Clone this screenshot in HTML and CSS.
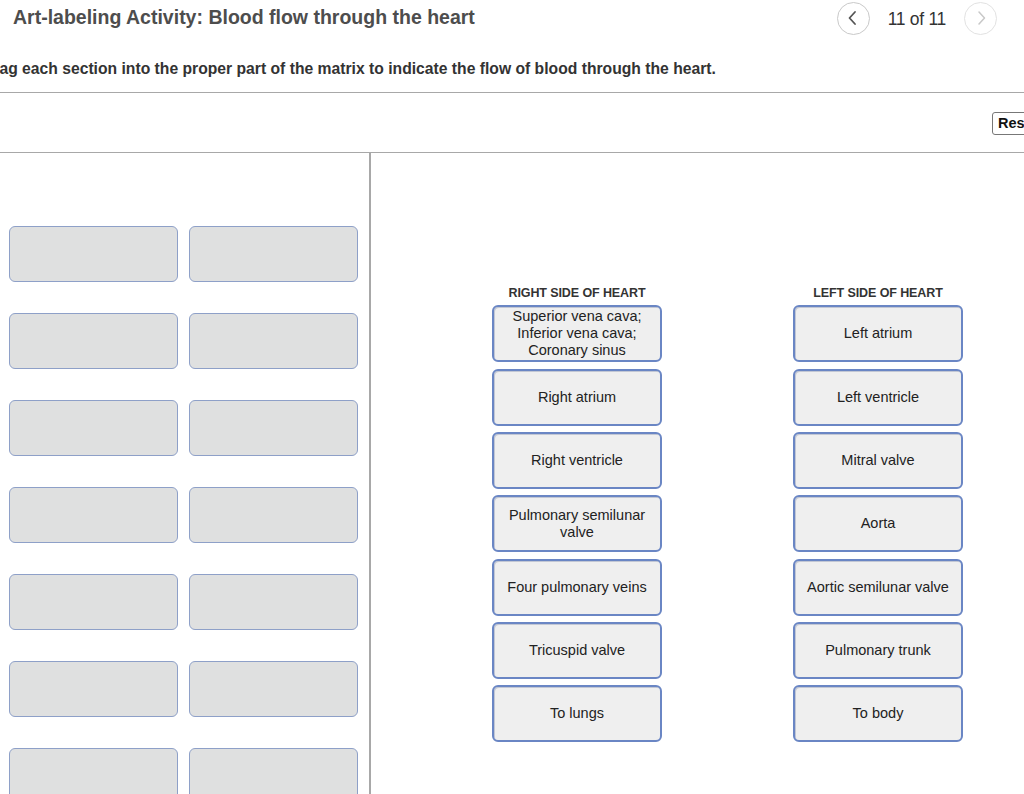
FILE: index.html
```html
<!DOCTYPE html>
<html>
<head>
<meta charset="utf-8">
<link rel="stylesheet" href="styles.css">
</head>
<body>
<div class="page">
  <header class="top">
    <h1 class="title">Art-labeling Activity: Blood flow through the heart</h1>
    <nav class="pager">
      <span class="circle prev"><svg width="14" height="16" viewBox="0 0 14 16"><path d="M9 2 L3.5 8 L9 14" fill="none" stroke="#555" stroke-width="1.8" stroke-linecap="round" stroke-linejoin="round"/></svg></span>
      <span class="count">11 of 11</span>
      <span class="circle next"><svg width="14" height="16" viewBox="0 0 14 16"><path d="M5 2 L10.5 8 L5 14" fill="none" stroke="#c8c8c8" stroke-width="1.5" stroke-linecap="round" stroke-linejoin="round"/></svg></span>
    </nav>
  </header>
  <p class="instructions">Drag each section into the proper part of the matrix to indicate the flow of blood through the heart.</p>
  <div class="toolbar">
    <button class="reset">Reset</button>
  </div>
  <main class="work">
    <section class="bank">
      <div class="slot"></div><div class="slot"></div>
      <div class="slot"></div><div class="slot"></div>
      <div class="slot"></div><div class="slot"></div>
      <div class="slot"></div><div class="slot"></div>
      <div class="slot"></div><div class="slot"></div>
      <div class="slot"></div><div class="slot"></div>
      <div class="slot"></div><div class="slot"></div>
    </section>
    <section class="matrix">
      <div class="col">
        <h2 class="col-head">RIGHT SIDE OF HEART</h2>
        <div class="cell">Superior vena cava;<br>Inferior vena cava;<br>Coronary sinus</div>
        <div class="cell">Right atrium</div>
        <div class="cell">Right ventricle</div>
        <div class="cell">Pulmonary semilunar<br>valve</div>
        <div class="cell">Four pulmonary veins</div>
        <div class="cell">Tricuspid valve</div>
        <div class="cell">To lungs</div>
      </div>
      <div class="col">
        <h2 class="col-head">LEFT SIDE OF HEART</h2>
        <div class="cell">Left atrium</div>
        <div class="cell">Left ventricle</div>
        <div class="cell">Mitral valve</div>
        <div class="cell">Aorta</div>
        <div class="cell">Aortic semilunar valve</div>
        <div class="cell">Pulmonary trunk</div>
        <div class="cell">To body</div>
      </div>
    </section>
  </main>
</div>
</body>
</html>
```
FILE: styles.css
```css
html, body {
  margin: 0;
  padding: 0;
  background: #fff;
  overflow: hidden;
}
body {
  font-family: "Liberation Sans", Arial, Helvetica, sans-serif;
  color: #333;
}
.page {
  width: 1024px;
  height: 794px;
  overflow: hidden;
}
.top {
  display: flex;
  align-items: center;
  justify-content: space-between;
  height: 36px;
  padding: 0 27px 0 13px;
}
.title {
  margin: 0 0 2px 0;
  font-size: 19.5px;
  font-weight: bold;
  color: #4d4d4d;
}
.pager {
  display: flex;
  align-items: center;
}
.circle {
  width: 31px;
  height: 31px;
  border: 1px solid #c9c9c9;
  border-radius: 50%;
  display: flex;
  align-items: center;
  justify-content: center;
}
.circle.next {
  border-color: #e2e2e2;
}
.count {
  font-size: 17.5px;
  color: #333;
  margin: 2px 18px 0 18px;
  letter-spacing: -0.3px;
}
.instructions {
  margin: 24px 0 0 -18px;
  height: 32px;
  font-size: 15.7px;
  font-weight: bold;
  color: #333;
  white-space: nowrap;
  border-bottom: 1px solid #a8a8a8;
}
.toolbar {
  height: 59px;
  display: flex;
  align-items: center;
  padding-left: 992px;
  border-bottom: 1px solid #a8a8a8;
  overflow: hidden;
}
.reset {
  flex: none;
  margin-top: 1px;
  height: 23px;
  padding: 0 5px;
  font-family: "Liberation Sans", Arial, sans-serif;
  font-size: 14.5px;
  font-weight: bold;
  color: #111;
  background: #fff;
  border: 1px solid #777;
  border-radius: 3px;
  white-space: nowrap;
}
.work {
  display: flex;
  height: 642px;
}
.bank {
  width: 360px;
  flex: none;
  border-right: 2px solid #a8a8a8;
  display: grid;
  grid-template-columns: 169px 169px;
  grid-auto-rows: 56px;
  column-gap: 11px;
  row-gap: 31px;
  padding: 73px 0 0 9px;
  box-sizing: content-box;
  align-content: start;
}
.slot {
  background: #dfe0e0;
  border: 1px solid #8ea0c8;
  border-radius: 6px;
}
.matrix {
  display: flex;
  gap: 131px;
  padding: 129px 0 0 121px;
  align-items: flex-start;
}
.col {
  width: 170px;
  display: flex;
  flex-direction: column;
  gap: 6.33px;
}
.col-head {
  margin: 0 0 -3px 0;
  padding-top: 2px;
  height: 18px;
  line-height: 18px;
  text-align: center;
  font-size: 12.5px;
  font-weight: bold;
  color: #333;
  letter-spacing: -0.1px;
}
.cell {
  height: 57px;
  box-sizing: border-box;
  border: 2px solid #6a86c4;
  border-radius: 6px;
  background: #efefef;
  box-shadow: inset 1px 1px 0 rgba(60, 80, 130, 0.25);
  display: flex;
  align-items: center;
  justify-content: center;
  text-align: center;
  font-size: 14.5px;
  line-height: 17px;
  color: #222;
  padding: 0 4px;
}
```
